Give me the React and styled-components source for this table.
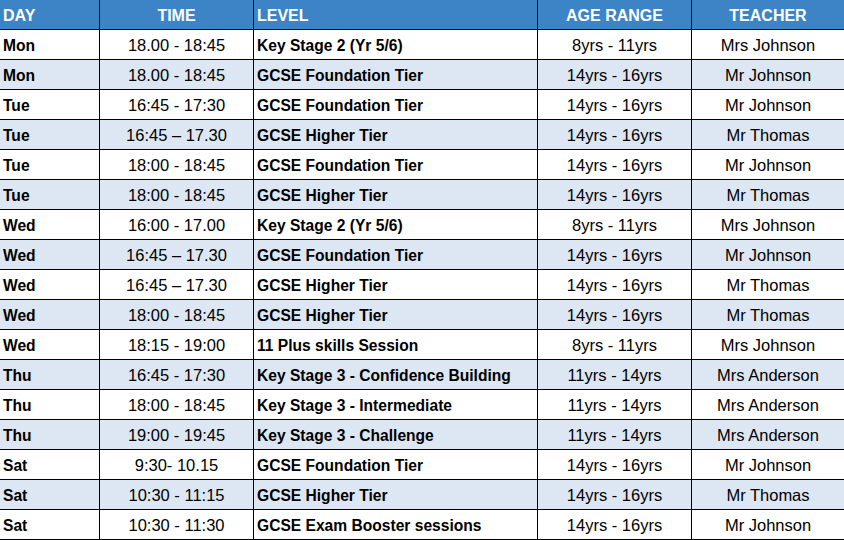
import styled, { createGlobalStyle } from 'styled-components'

const GlobalStyle = createGlobalStyle`
  html, body {
    margin: 0;
    padding: 0;
    background: #ffffff;
  }
  body {
    font-family: "Liberation Sans", Arial, sans-serif;
    color: #000000;
  }
`

const rows = [
  ['Mon', '18.00 - 18:45', 'Key Stage 2 (Yr 5/6)', '8yrs - 11yrs', 'Mrs Johnson'],
  ['Mon', '18.00 - 18:45', 'GCSE Foundation Tier', '14yrs - 16yrs', 'Mr Johnson'],
  ['Tue', '16:45 - 17:30', 'GCSE Foundation Tier', '14yrs - 16yrs', 'Mr Johnson'],
  ['Tue', '16:45 \u2013 17.30', 'GCSE Higher Tier', '14yrs - 16yrs', 'Mr Thomas'],
  ['Tue', '18:00 - 18:45', 'GCSE Foundation Tier', '14yrs - 16yrs', 'Mr Johnson'],
  ['Tue', '18:00 - 18:45', 'GCSE Higher Tier', '14yrs - 16yrs', 'Mr Thomas'],
  ['Wed', '16:00 - 17.00', 'Key Stage 2 (Yr 5/6)', '8yrs - 11yrs', 'Mrs Johnson'],
  ['Wed', '16:45 \u2013 17.30', 'GCSE Foundation Tier', '14yrs - 16yrs', 'Mr Johnson'],
  ['Wed', '16:45 \u2013 17.30', 'GCSE Higher Tier', '14yrs - 16yrs', 'Mr Thomas'],
  ['Wed', '18:00 - 18:45', 'GCSE Higher Tier', '14yrs - 16yrs', 'Mr Thomas'],
  ['Wed', '18:15 - 19:00', '11 Plus skills Session', '8yrs - 11yrs', 'Mrs Johnson'],
  ['Thu', '16:45 - 17:30', 'Key Stage 3 - Confidence Building', '11yrs - 14yrs', 'Mrs Anderson'],
  ['Thu', '18:00 - 18:45', 'Key Stage 3 - Intermediate', '11yrs - 14yrs', 'Mrs Anderson'],
  ['Thu', '19:00 - 19:45', 'Key Stage 3 - Challenge', '11yrs - 14yrs', 'Mrs Anderson'],
  ['Sat', '9:30- 10.15', 'GCSE Foundation Tier', '14yrs - 16yrs', 'Mr Johnson'],
  ['Sat', '10:30 - 11:15', 'GCSE Higher Tier', '14yrs - 16yrs', 'Mr Thomas'],
  ['Sat', '10:30 - 11:30', 'GCSE Exam Booster sessions', '14yrs - 16yrs', 'Mr Johnson'],
]

// day and level are bold and left aligned, the rest centred
const columns = [
  { title: 'DAY', align: 'left', bold: true },
  { title: 'TIME', align: 'center', bold: false },
  { title: 'LEVEL', align: 'left', bold: true },
  { title: 'AGE RANGE', align: 'center', bold: false },
  { title: 'TEACHER', align: 'center', bold: false },
]

const Grid = styled.div`
  display: grid;
  grid-template-columns: 100px 154px 284px 154px 152px;
  width: 844px;
  height: 540px;
  overflow: hidden;
`

const Cell = styled.div`
  box-sizing: border-box;
  height: 30px;
  padding-top: 2px;
  padding-left: ${p => (p.$align === 'left' ? '3px' : '0')};
  border-bottom: 1px solid #000;
  border-right: ${p => (p.$last ? 'none' : '1px solid #000')};
  background: ${p => (p.$shaded ? '#dde7f3' : '#ffffff')};
  display: flex;
  align-items: center;
  justify-content: ${p => (p.$align === 'left' ? 'flex-start' : 'center')};
  font-size: ${p => (p.$bold ? '15.6px' : '16.5px')};
  font-weight: ${p => (p.$bold ? 700 : 400)};
  white-space: nowrap;
`

const HeadCell = styled(Cell)`
  background: #3d84c6;
  color: #ffffff;
  font-weight: 700;
  font-size: 16px;
`

export default function App() {
  return (
    <>
      <GlobalStyle />
      <Grid>
        {columns.map((c, i) => (
          <HeadCell key={c.title} $align={c.align} $last={i === columns.length - 1} $bold>
            {c.title}
          </HeadCell>
        ))}
        {rows.map((r, ri) =>
          r.map((v, ci) => (
            <Cell
              key={ri + '-' + ci}
              $align={columns[ci].align}
              $bold={columns[ci].bold}
              $shaded={ri % 2 === 1}
              $last={ci === columns.length - 1}
            >
              {v}
            </Cell>
          ))
        )}
      </Grid>
    </>
  )
}
